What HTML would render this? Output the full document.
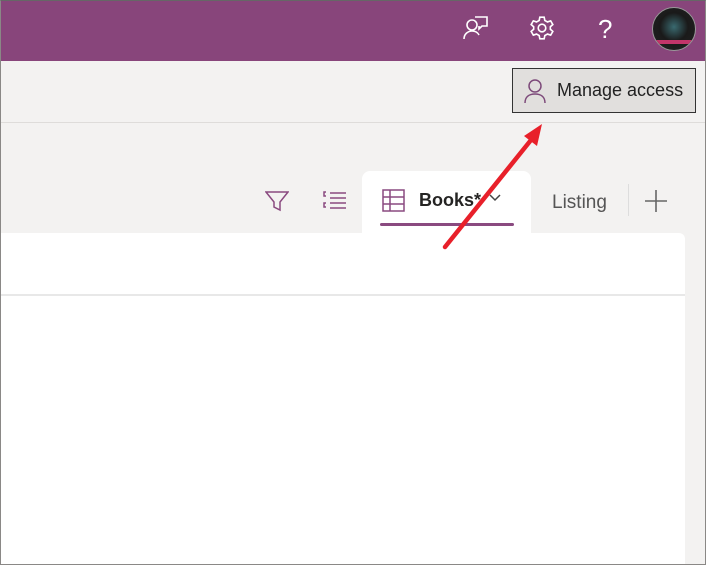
<!DOCTYPE html>
<html><head><style>
html,body{margin:0;width:708px;height:566px;overflow:hidden}
body{background:#f3f2f1;font-family:"Liberation Sans",sans-serif;position:relative}
.b{position:absolute;left:0;top:0;width:706px;height:565px;border:1px solid #8a8886;border-top-color:#666;box-sizing:border-box;pointer-events:none;z-index:9}
.top{position:absolute;left:0;top:0;width:708px;height:61px;background:#88457b}
.hr{position:absolute;left:0;top:122px;width:706px;height:1px;background:#dedcda}
.btn{position:absolute;left:512px;top:68px;width:184px;height:45px;border:1px solid #333;background:#e1dfdd;box-sizing:border-box;font-size:18px;color:#222;line-height:43px;padding-left:44px}
.panel{position:absolute;left:0;top:233px;width:685px;height:333px;background:#fff;border-radius:0 6px 0 0}
.line{position:absolute;left:0;top:294px;width:685px;height:2px;background:#e8e8e8}
.tab{position:absolute;left:362px;top:171px;width:169px;height:70px;background:#fff;border-radius:8px 8px 0 0}
.ul{position:absolute;left:380px;top:223px;width:134px;height:3px;background:#8a4a80;border-radius:2px}
.t{position:absolute;font-size:19px}
</style></head><body>
<div class="top"></div>
<svg style="position:absolute;left:462px;top:14px" width="28" height="28" viewBox="0 0 28 28" fill="none" stroke="#fff" stroke-width="1.6"><circle cx="10" cy="11" r="5"/><path d="M2 25c0-5 4-8 8-8s6 2 7 4"/><path d="M13 3h12v9h-5l-3 3v-3"/></svg>
<svg style="position:absolute;left:529px;top:15px" width="26" height="26" viewBox="0 0 24 24" fill="none" stroke="#fff" stroke-width="1.5"><circle cx="12" cy="12" r="3.5"/><path d="M10 2h4l.6 3 2.5 1.4 2.9-1 2 3.4-2.3 2v2.4l2.3 2-2 3.4-2.9-1L14.6 19 14 22h-4l-.6-3-2.5-1.4-2.9 1-2-3.4 2.3-2v-2.4l-2.3-2 2-3.4 2.9 1L9.4 5z"/></svg>
<div class="t" style="left:598px;top:14px;color:#fff;font-size:26px">?</div>
<div style="position:absolute;left:652px;top:7px;width:44px;height:44px;border-radius:50%;background:radial-gradient(circle at 50% 45%,#3a6a70 0,#1a1a1a 45%,#222 100%);border:1px solid #999;box-sizing:border-box;overflow:hidden"><div style="position:absolute;left:0;right:0;bottom:6px;height:4px;background:#c2356a"></div></div>
<div class="hr"></div>
<div class="btn">Manage access</div>
<svg style="position:absolute;left:523px;top:78px" width="24" height="26" viewBox="0 0 24 26" fill="none" stroke="#7d4a7a" stroke-width="1.5"><circle cx="12" cy="8" r="6"/><path d="M2 25c0-6 4-9 10-9s10 3 10 9"/></svg>
<div class="tab"></div>
<div class="panel"></div>
<div class="line"></div>
<div class="ul"></div>
<svg style="position:absolute;left:265px;top:190px" width="24" height="22" viewBox="0 0 24 22" fill="none" stroke="#8a4a80" stroke-width="1.5"><path d="M1 2h22l-8 10v8l-6-3v-5z"/></svg>
<svg style="position:absolute;left:323px;top:190px" width="24" height="20" viewBox="0 0 24 20" fill="none" stroke="#8a4a80" stroke-width="1.5"><path d="M3 2H1v4h2M3 13H1v4h2M7 3h16M7 8h16M7 13h16M7 18h16"/></svg>
<svg style="position:absolute;left:382px;top:189px" width="23" height="23" viewBox="0 0 23 23" fill="none" stroke="#8a4a80" stroke-width="1.5"><rect x="1" y="1" width="21" height="21"/><path d="M1 8h21M1 15h21M8 1v21"/></svg>
<div class="t" style="left:419px;top:190px;color:#252423;font-weight:bold;font-size:18px">Books*</div>
<svg style="position:absolute;left:489px;top:194px" width="12" height="8" viewBox="0 0 12 8" fill="none" stroke="#444" stroke-width="1.5"><path d="M1 1l5 5 5-5"/></svg>
<div class="t" style="left:552px;top:192px;color:#555">Listing</div>
<div style="position:absolute;left:628px;top:184px;width:1px;height:32px;background:#ddd"></div>
<svg style="position:absolute;left:645px;top:190px" width="22" height="22" viewBox="0 0 22 22" stroke="#666" stroke-width="1.6"><path d="M11 0v22M0 11h22"/></svg>
<svg style="position:absolute;left:0;top:0" width="708" height="566"><line x1="445" y1="247" x2="531" y2="140" stroke="#e8202a" stroke-width="4.5" stroke-linecap="round"/><polygon points="542,124 524,136 537,146" fill="#e8202a"/></svg>
<div style="position:absolute;left:706px;top:0;width:2px;height:566px;background:#fff;z-index:10"></div>
<div style="position:absolute;left:0;top:565px;width:708px;height:1px;background:#fff;z-index:10"></div>
<div class="b"></div>
</body></html>
